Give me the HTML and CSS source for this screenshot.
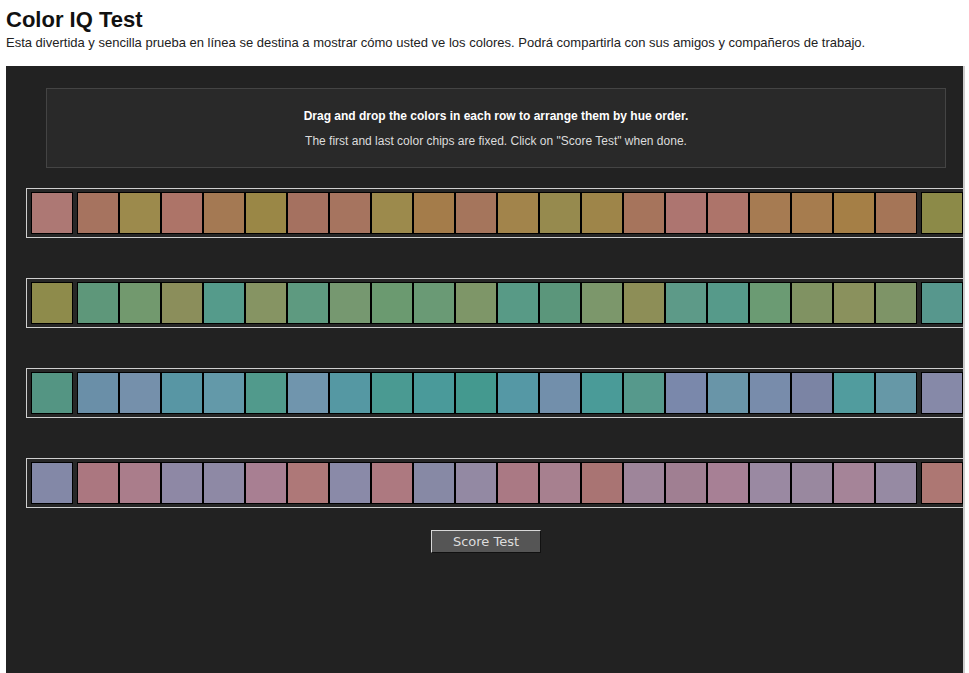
FILE: index.html
```html
<!DOCTYPE html>
<html lang="es">
<head>
<meta charset="utf-8">
<title>Color IQ Test</title>
<link rel="stylesheet" href="styles.css">
</head>
<body>
<h1 class="title">Color IQ Test</h1>
<p class="intro">Esta divertida y sencilla prueba en línea se destina a mostrar cómo usted ve los colores. Podrá compartirla con sus amigos y compañeros de trabajo.</p>
<div class="panel">
  <div class="instructions">
    <p class="lead">Drag and drop the colors in each row to arrange them by hue order.</p>
    <p class="note">The first and last color chips are fixed. Click on "Score Test" when done.</p>
  </div>

  <div class="row">
    <div class="chip fixed first" style="background:#ad7874"></div>
    <div class="chip" style="background:#a6735f"></div>
    <div class="chip" style="background:#9c8a4c"></div>
    <div class="chip" style="background:#ad7468"></div>
    <div class="chip" style="background:#a47953"></div>
    <div class="chip" style="background:#9a8746"></div>
    <div class="chip" style="background:#a57160"></div>
    <div class="chip" style="background:#a6745f"></div>
    <div class="chip" style="background:#9c8a4c"></div>
    <div class="chip" style="background:#a47c4a"></div>
    <div class="chip" style="background:#a5755c"></div>
    <div class="chip" style="background:#a2844b"></div>
    <div class="chip" style="background:#968a4e"></div>
    <div class="chip" style="background:#9e8549"></div>
    <div class="chip" style="background:#a6745c"></div>
    <div class="chip" style="background:#ad7570"></div>
    <div class="chip" style="background:#ad746a"></div>
    <div class="chip" style="background:#a67b52"></div>
    <div class="chip" style="background:#a67c4e"></div>
    <div class="chip" style="background:#a57f46"></div>
    <div class="chip" style="background:#a57557"></div>
    <div class="chip fixed last" style="background:#8c8a48"></div>
  </div>

  <div class="row">
    <div class="chip fixed first" style="background:#8e8b4b"></div>
    <div class="chip" style="background:#5e977a"></div>
    <div class="chip" style="background:#72996e"></div>
    <div class="chip" style="background:#8b8e5b"></div>
    <div class="chip" style="background:#559b8b"></div>
    <div class="chip" style="background:#869463"></div>
    <div class="chip" style="background:#5e9a80"></div>
    <div class="chip" style="background:#769870"></div>
    <div class="chip" style="background:#6b9a70"></div>
    <div class="chip" style="background:#6a9a75"></div>
    <div class="chip" style="background:#7e9668"></div>
    <div class="chip" style="background:#589a86"></div>
    <div class="chip" style="background:#5b967b"></div>
    <div class="chip" style="background:#7c976b"></div>
    <div class="chip" style="background:#8d8e57"></div>
    <div class="chip" style="background:#5d9a88"></div>
    <div class="chip" style="background:#569a8a"></div>
    <div class="chip" style="background:#6b9b73"></div>
    <div class="chip" style="background:#809262"></div>
    <div class="chip" style="background:#8a915d"></div>
    <div class="chip" style="background:#7e9467"></div>
    <div class="chip fixed last" style="background:#57978d"></div>
  </div>

  <div class="row">
    <div class="chip fixed first" style="background:#549583"></div>
    <div class="chip" style="background:#6a8fa8"></div>
    <div class="chip" style="background:#7590ab"></div>
    <div class="chip" style="background:#5896a4"></div>
    <div class="chip" style="background:#6399a9"></div>
    <div class="chip" style="background:#519a8c"></div>
    <div class="chip" style="background:#7095ad"></div>
    <div class="chip" style="background:#5598a3"></div>
    <div class="chip" style="background:#4a9a92"></div>
    <div class="chip" style="background:#4a9a9a"></div>
    <div class="chip" style="background:#44998f"></div>
    <div class="chip" style="background:#5598a5"></div>
    <div class="chip" style="background:#728fab"></div>
    <div class="chip" style="background:#4a9b98"></div>
    <div class="chip" style="background:#56998c"></div>
    <div class="chip" style="background:#7a88ab"></div>
    <div class="chip" style="background:#6995a8"></div>
    <div class="chip" style="background:#788cab"></div>
    <div class="chip" style="background:#7b84a4"></div>
    <div class="chip" style="background:#519c9e"></div>
    <div class="chip" style="background:#6698a7"></div>
    <div class="chip fixed last" style="background:#8689a8"></div>
  </div>

  <div class="row">
    <div class="chip fixed first" style="background:#8388a7"></div>
    <div class="chip" style="background:#ab7780"></div>
    <div class="chip" style="background:#aa7d8b"></div>
    <div class="chip" style="background:#8e88a5"></div>
    <div class="chip" style="background:#8e89a5"></div>
    <div class="chip" style="background:#a87f92"></div>
    <div class="chip" style="background:#ae7878"></div>
    <div class="chip" style="background:#8a8aa8"></div>
    <div class="chip" style="background:#ad7980"></div>
    <div class="chip" style="background:#8789a5"></div>
    <div class="chip" style="background:#9389a3"></div>
    <div class="chip" style="background:#aa7984"></div>
    <div class="chip" style="background:#a7808f"></div>
    <div class="chip" style="background:#a97473"></div>
    <div class="chip" style="background:#9e859a"></div>
    <div class="chip" style="background:#a07f92"></div>
    <div class="chip" style="background:#a78095"></div>
    <div class="chip" style="background:#9a89a2"></div>
    <div class="chip" style="background:#99889f"></div>
    <div class="chip" style="background:#a58498"></div>
    <div class="chip" style="background:#968aa3"></div>
    <div class="chip fixed last" style="background:#ad7773"></div>
  </div>

  <button class="score" type="button">Score Test</button>
</div>
</body>
</html>
```
FILE: styles.css
```css
html, body {
  margin: 0;
  padding: 0;
  overflow: hidden;
}

body {
  background: #ffffff;
  padding: 0 6px;
  font-family: "Liberation Sans", Arial, Helvetica, sans-serif;
  color: #111;
}

.title {
  margin: 7px 0 0 0;
  font-size: 22px;
  line-height: 26px;
  font-weight: bold;
  color: #111;
}

.intro {
  margin: 2px 0 16px 0;
  font-size: 13px;
  line-height: 15px;
  color: #222;
}

.panel {
  width: 957px;
  height: 585px;
  background: #222222;
  padding-top: 22px;
  overflow: hidden;
  border-right: 2px solid #cdcdcd;
}

.instructions {
  width: 898px;
  margin: 0 0 20px 40px;
  border: 1px solid #444444;
  background: #292929;
  padding: 20px 0 19px 0;
  text-align: center;
}

.instructions p {
  margin: 0;
  font-size: 12px;
  line-height: 14px;
}

.lead {
  color: #ffffff;
  font-weight: bold;
}

.note {
  color: #dcdcdc;
  margin-top: 11px !important;
}

.row {
  display: flex;
  width: max-content;
  margin: 0 0 40px 20px;
  padding: 3px 4px;
  border: 1px solid #cfcfcf;
  background: #272727;
}

.row:last-of-type {
  margin-bottom: 22px;
}

.chip {
  flex: none;
  width: 40px;
  height: 40px;
  border: 1px solid #000;
}

.chip.first {
  margin-right: 4px;
}

.chip.last {
  margin-left: 4px;
}

.score {
  display: block;
  margin: 0 0 0 425px;
  width: 110px;
  height: 23px;
  padding: 1px 0 0 0;
  background: #555555;
  color: #dddddd;
  font-family: "DejaVu Sans", Verdana, sans-serif;
  font-size: 13px;
  line-height: 20px;
  border-style: solid;
  border-width: 1px;
  border-color: #d8d8d8 #111111 #111111 #d8d8d8;
  border-radius: 0;
}
```
